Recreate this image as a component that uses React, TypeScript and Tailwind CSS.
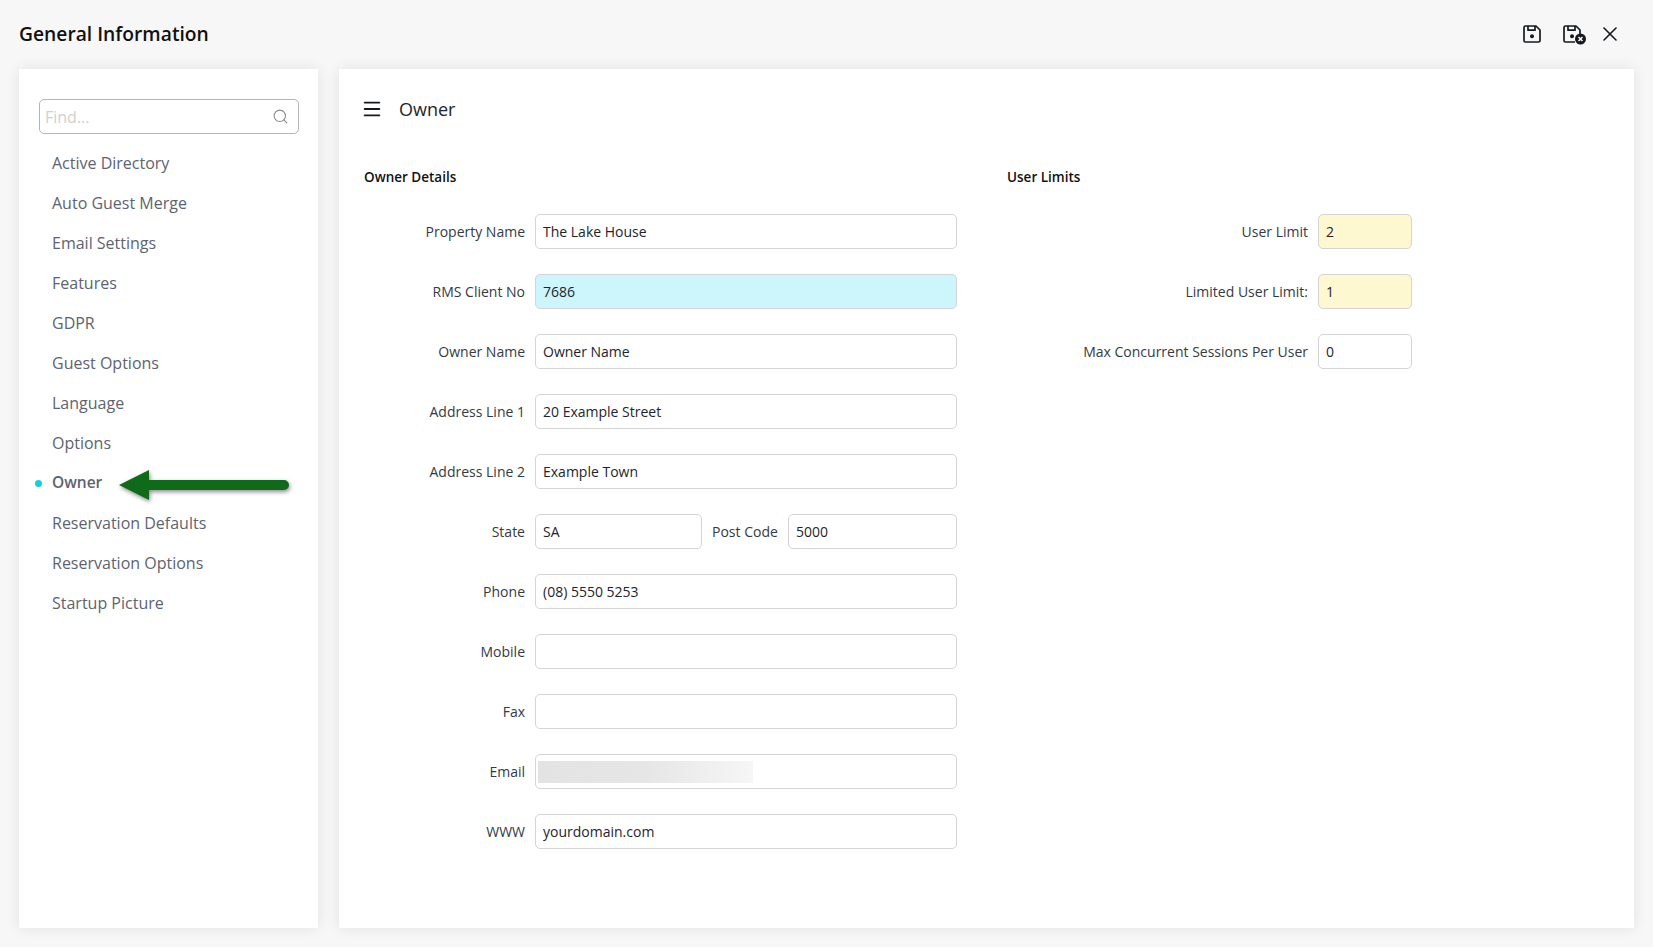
import React from 'react';
import { Menu, Search, X } from 'lucide-react';

const navItems = [
    'Active Directory',
    'Auto Guest Merge',
    'Email Settings',
    'Features',
    'GDPR',
    'Guest Options',
    'Language',
    'Options',
    'Owner',
    'Reservation Defaults',
    'Reservation Options',
    'Startup Picture'
];

const inputClass = 'h-[35px] rounded-[5px] border border-[#d4d4d6] px-[7px] text-[14px] text-[#1d2430] outline-none';

const Field: React.FC<{ value?: string; className?: string }> = ({ value = '', className = 'w-[422px] bg-white' }) => (
    <input readOnly value={value} className={`${inputClass} ${className}`} />
);

const Row: React.FC<{ label: string; labelWidth?: string; children: React.ReactNode }> = ({ label, labelWidth = 'w-[161px]', children }) => (
    <div className="flex items-center gap-[10px]">
        <label className={`${labelWidth} shrink-0 text-right text-[14px] text-[#333a45]`}>{label}</label>
        {children}
    </div>
);

const SaveIcon: React.FC = () => (
    <svg width="18" height="18" viewBox="0 0 18 18" fill="none" stroke="#15181d" strokeWidth="1.7" strokeLinejoin="round">
        <path d="M2.5 1H13L17 5V15.5A1.5 1.5 0 0 1 15.5 17H2.5A1.5 1.5 0 0 1 1 15.5V2.5A1.5 1.5 0 0 1 2.5 1Z" />
        <path d="M5 1V5.2H12V1" />
        <circle cx="9" cy="11.2" r="2" fill="#15181d" stroke="none" />
    </svg>
);

const SaveCloseIcon: React.FC = () => (
    <svg width="24" height="20" viewBox="0 0 24 20" fill="none" stroke="#15181d" strokeWidth="1.7" strokeLinejoin="round">
        <path d="M12 17H2.5A1.5 1.5 0 0 1 1 15.5V2.5A1.5 1.5 0 0 1 2.5 1H13L17 5V9" />
        <path d="M5 1V5.2H12V1" />
        <circle cx="9" cy="11.2" r="2" fill="#15181d" stroke="none" />
        <circle cx="17.5" cy="14" r="5.5" fill="#15181d" stroke="none" />
        <path d="M15.5 12L19.5 16M19.5 12L15.5 16" stroke="#ffffff" strokeWidth="1.5" />
    </svg>
);

const Arrow: React.FC = () => (
    <svg className="absolute left-[100px] top-[6px] drop-shadow-[1px_2px_2px_rgba(0,0,0,0.45)]" width="172" height="32" viewBox="0 0 172 32" fill="none">
        <path d="M0 16L30 1V11H165A5 5 0 0 1 165 21H30V31Z" fill="#0f6b1a" />
    </svg>
);

export default function App() {
    return (
        <div className="flex h-[947px] w-full flex-col overflow-hidden bg-[#f7f7f8] font-['Open_Sans',sans-serif]">

            {/* Header */}
            <div className="flex h-[69px] shrink-0 items-center justify-between pb-[2px] pl-[19px] pr-[31px]">
                <h1 className="text-[19.25px] font-semibold leading-none text-[#111]">General Information</h1>
                <div className="flex items-center">
                    <SaveIcon />
                    <div className="ml-[22px] mt-[2px]"><SaveCloseIcon /></div>
                    <X className="ml-[11px] h-[24px] w-[24px] text-[#15181d]" strokeWidth={1.6} />
                </div>
            </div>

            <div className="flex h-[859px] shrink-0 gap-[21px] px-[19px]">

                {/* Sidebar */}
                <div className="w-[299px] shrink-0 bg-white pt-[30px] shadow-[0_0_14px_rgba(0,0,0,0.09)]">
                    <div className="ml-[20px] mr-[19px] flex h-[35px] items-center justify-between rounded-[5px] border border-[#b5b5b7] pl-[5px] pr-[9px]">
                        <span className="text-[16px] text-[#cfcfcf]">Find...</span>
                        <Search className="h-[17px] w-[17px] text-[#8a8a8a]" strokeWidth={1.5} />
                    </div>
                    <div className="mt-[9px]">
                        {navItems.map((item) => (
                            <div key={item} className="relative flex h-[40px] items-center gap-[10px] pl-[16px]">
                                <span className={`h-[7px] w-[7px] rounded-full ${item === 'Owner' ? 'bg-[#14cfe0]' : ''}`} />
                                <span className={item === 'Owner' ? 'text-[15.5px] font-semibold text-[#5d6371]' : 'text-[16px] text-[#5d6371]'}>{item}</span>
                                {item === 'Owner' && <Arrow />}
                            </div>
                        ))}
                    </div>
                </div>

                {/* Main */}
                <div className="min-w-0 flex-1 bg-white pl-[25px] pt-[27px] shadow-[0_0_14px_rgba(0,0,0,0.09)]">
                    <div className="-ml-[3px] flex h-[26px] items-center gap-[16px]">
                        <Menu className="h-[22px] w-[22px] text-[#15181d]" strokeWidth={2} />
                        <h2 className="text-[18px] leading-none text-[#1d2430]">Owner</h2>
                    </div>

                    <div className="mt-[45px] flex gap-[50px]">

                        {/* Owner Details */}
                        <div>
                            <h3 className="h-[20px] text-[13.5px] font-semibold leading-[20px] text-[#111]">Owner Details</h3>
                            <div className="mt-[27px] flex flex-col gap-[25px]">
                                <Row label="Property Name"><Field value="The Lake House" /></Row>
                                <Row label="RMS Client No"><Field value="7686" className="w-[422px] bg-[#ccf6fb]" /></Row>
                                <Row label="Owner Name"><Field value="Owner Name" /></Row>
                                <Row label="Address Line 1"><Field value="20 Example Street" /></Row>
                                <Row label="Address Line 2"><Field value="Example Town" /></Row>
                                <Row label="State">
                                    <Field value="SA" className="w-[167px] bg-white" />
                                    <label className="w-[66px] shrink-0 text-[14px] text-[#333a45]">Post Code</label>
                                    <Field value="5000" className="w-[169px] bg-white" />
                                </Row>
                                <Row label="Phone"><Field value="(08) 5550 5253" /></Row>
                                <Row label="Mobile"><Field /></Row>
                                <Row label="Fax"><Field /></Row>
                                <Row label="Email">
                                    <div className="relative">
                                        <Field />
                                        <div className="absolute left-[3px] top-[7px] h-[22px] w-[215px] bg-gradient-to-r from-[#e3e3e3] via-[#e6e6e6] to-[#f6f6f6]" />
                                    </div>
                                </Row>
                                <Row label="WWW"><Field value="yourdomain.com" /></Row>
                            </div>
                        </div>

                        {/* User Limits */}
                        <div>
                            <h3 className="h-[20px] text-[13.5px] font-semibold leading-[20px] text-[#111]">User Limits</h3>
                            <div className="mt-[27px] flex flex-col gap-[25px]">
                                <Row label="User Limit" labelWidth="w-[301px]"><Field value="2" className="w-[94px] bg-[#fef8d0]" /></Row>
                                <Row label="Limited User Limit:" labelWidth="w-[301px]"><Field value="1" className="w-[94px] bg-[#fef8d0]" /></Row>
                                <Row label="Max Concurrent Sessions Per User" labelWidth="w-[301px]"><Field value="0" className="w-[94px] bg-white" /></Row>
                            </div>
                        </div>
                    </div>
                </div>
            </div>
        </div>
    );
}
